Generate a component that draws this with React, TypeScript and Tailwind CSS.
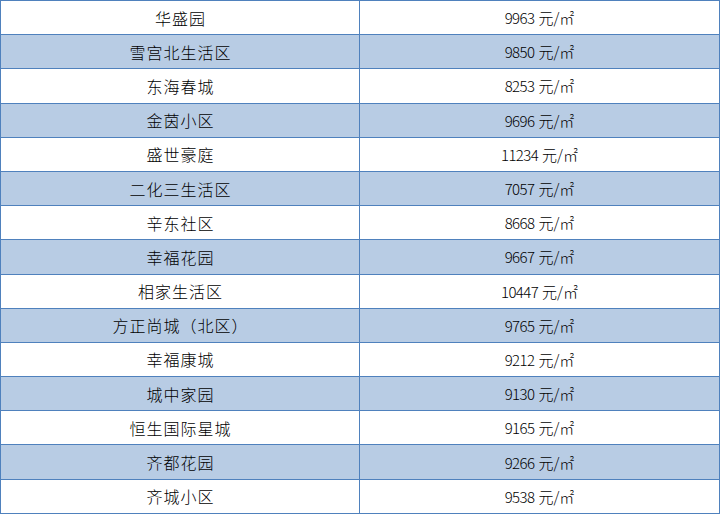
import React from 'react';

const rows: [string, string][] = [
  ['华盛园', '9963'],
  ['雪宫北生活区', '9850'],
  ['东海春城', '8253'],
  ['金茵小区', '9696'],
  ['盛世豪庭', '11234'],
  ['二化三生活区', '7057'],
  ['辛东社区', '8668'],
  ['幸福花园', '9667'],
  ['相家生活区', '10447'],
  ['方正尚城（北区）', '9765'],
  ['幸福康城', '9212'],
  ['城中家园', '9130'],
  ['恒生国际星城', '9165'],
  ['齐都花园', '9266'],
  ['齐城小区', '9538'],
];

export default function App() {
  return (
    <div className="w-[720px] h-[514px] bg-white">
      <table className="w-[720px] h-[514px] border-collapse table-fixed text-black font-light font-['Noto_Sans_CJK_SC',sans-serif]">
        <tbody>
          {rows.map(([name, price], i) => (
            <tr key={name} className={i % 2 === 1 ? 'bg-[#b8cce4]' : 'bg-white'}>
              <td className="w-[359px] border border-[#4f81bd] text-center align-middle p-0 leading-none text-[16px] tracking-[1px] pl-[1px]">
                {name}
              </td>
              <td className="border border-[#4f81bd] text-center align-middle p-0 leading-none text-[15px]">
                <span className="tracking-[-0.6px]">{price}</span>
                <span className="ml-[4px]">元/㎡</span>
              </td>
            </tr>
          ))}
        </tbody>
      </table>
    </div>
  );
}
